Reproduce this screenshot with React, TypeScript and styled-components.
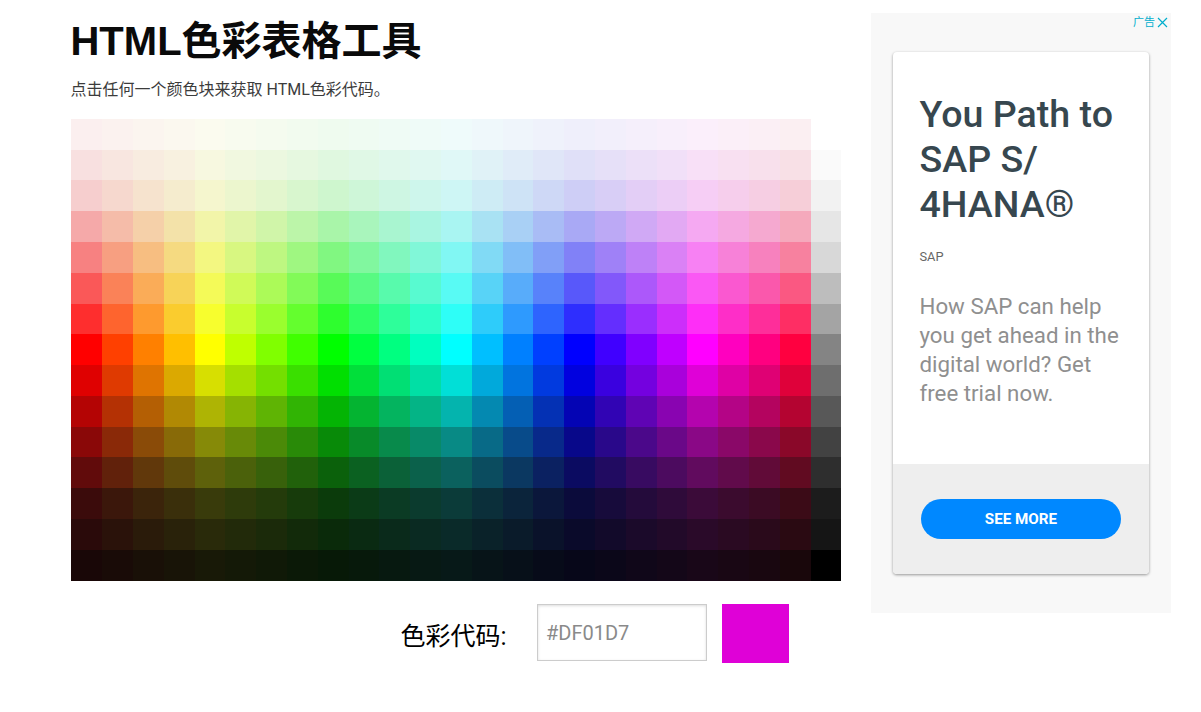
import { useState } from "react";
import styled, { createGlobalStyle } from "styled-components";

const COLUMNS = [
  "FBEFEF F8E0E0 F6CECE F5A9A9 F78181 FA5858 FE2E2E FF0000 DF0101 B40404 8A0808 610B0B 3B0B0B 2A0A0A 190707",
  "FBF2EF F8E6E0 F6D8CE F5BCA9 F79F81 FA8258 FE642E FF4000 DF3A01 B43104 8A2908 61210B 3B170B 2A120A 190B07",
  "FBF5EF F8ECE0 F6E3CE F5D0A9 F7BE81 FAAC58 FE9A2E FF8000 DF7401 B45F04 8A4B08 61380B 3B240B 2A1B0A 191007",
  "FBF8EF F8F1E0 F5ECCE F3E2A9 F5DA81 F7D358 FACC2E FFBF00 DBA901 B18904 886A08 5F4C0B 3A2F0B 29220A 181407",
  "FBFBEF F7F8E0 F5F6CE F2F5A9 F3F781 F4FA58 F7FE2E FFFF00 D7DF01 AEB404 868A08 5E610B 393B0B 292A0A 181907",
  "F8FBEF F1F8E0 ECF6CE E1F5A9 D8F781 D0FA58 C8FE2E BFFF00 A5DF00 86B404 688A08 4B610B 2E3B0B 222A0A 141907",
  "F5FBEF ECF8E0 E3F6CE D0F5A9 BEF781 ACFA58 9AFE2E 80FF00 74DF00 5FB404 4B8A08 38610B 243B0B 1B2A0A 101907",
  "F2FBEF E6F8E0 D8F6CE BCF5A9 9FF781 82FA58 64FE2E 40FF00 3ADF00 31B404 298A08 21610B 173B0B 122A0A 0B1907",
  "EFFBEF E0F8E0 CEF6CE A9F5A9 81F781 58FA58 2EFE2E 00FF00 01DF01 04B404 088A08 0B610B 0B3B0B 0A2A0A 071907",
  "EFFBF2 E0F8E6 CEF6D8 A9F5BC 81F79F 58FA82 2EFE64 00FF40 01DF3A 04B431 088A29 0B6121 0B3B17 0A2A12 07190B",
  "EFFBF5 E0F8EC CEF6E3 A9F5D0 81F7BE 58FAAC 2EFE9A 00FF80 01DF74 04B45F 088A4B 0B6138 0B3B24 0A2A1B 071910",
  "EFFBF8 E0F8F1 CEF6EC A9F5E1 81F7D8 58FAD0 2EFEC8 00FFBF 01DFA5 04B486 088A68 0B614B 0B3B2E 0A2A22 071914",
  "EFFBFB E0F8F7 CEF6F5 A9F5F2 81F7F3 58FAF4 2EFEF7 00FFFF 01DFD7 04B4AE 088A85 0B615E 0B3B39 0A2A29 071918",
  "EFF8FB E0F2F7 CEECF5 A9E2F3 81DAF5 58D3F7 2ECCFA 00BFFF 01A9DB 0489B1 086A87 0B4C5F 0B2F3A 0A2229 071418",
  "EFF5FB E0ECF8 CEE3F6 A9D0F5 81BEF7 58ACFA 2E9AFE 0080FF 0174DF 045FB4 084B8A 0B3861 0B243B 0A1B2A 071019",
  "EFF2FB E0E6F8 CED8F6 A9BCF5 819FF7 5882FA 2E64FE 0040FF 013ADF 0431B4 08298A 0B2161 0B173B 0A122A 070B19",
  "EFEFFB E0E0F8 CECEF6 A9A9F5 8181F7 5858FA 2E2EFE 0000FF 0101DF 0404B4 08088A 0B0B61 0B0B3B 0A0A2A 070719",
  "F2EFFB E6E0F8 D8CEF6 BCA9F5 9F81F7 8258FA 642EFE 4000FF 3A01DF 3104B4 29088A 210B61 170B3B 120A2A 0B0719",
  "F5EFFB ECE0F8 E3CEF6 D0A9F5 BE81F7 AC58FA 9A2EFE 8000FF 7401DF 5F04B4 4B088A 380B61 240B3B 1B0A2A 100719",
  "F8EFFB F1E0F8 ECCEF6 E2A9F3 DA81F5 D358F7 CC2EFA BF00FF A901DB 8904B1 6A0888 4C0B5F 2F0B3A 220A29 140718",
  "FBEFFB F8E0F7 F6CEF5 F5A9F2 F781F3 FA58F4 FE2EF7 FF00FF DF01D7 B404AE 8A0886 610B5E 3B0B39 2A0A29 190718",
  "FBEFF8 F8E0F1 F6CEEC F5A9E1 F781D8 FA58D0 FE2EC8 FF00BF DF01A5 B40486 8A0868 610B4B 3B0B2E 2A0A22 190714",
  "FBEFF5 F8E0EC F6CEE3 F5A9D0 F781BE FA58AC FE2E9A FF0080 DF0174 B4045F 8A084B 610B38 3B0B24 2A0A1B 190710",
  "FBEFF2 F8E0E6 F6CED8 F5A9BC F7819F FA5882 FE2E64 FF0040 DF013A B40431 8A0829 610B21 3B0B17 2A0A12 19070B",
  "FFFFFF FAFAFA F2F2F2 E6E6E6 D8D8D8 BDBDBD A4A4A4 848484 6E6E6E 585858 424242 2E2E2E 1C1C1C 151515 000000",
].map((column) => column.split(" "));

const GlobalStyle = createGlobalStyle`
  body {
    margin: 0;
    background: #fff;
    font-family: Roboto, "Noto Sans CJK SC", sans-serif;
  }
`;

const Page = styled.div`
  display: flex;
  align-items: flex-start;
  padding-left: 71.49px;
`;

const Main = styled.main`
  width: 770px;
  margin-right: 29.51px;
`;

const Title = styled.h1`
  margin: 16px 0 0 -1px;
  font: bold 40px/50px "Liberation Sans", "Noto Sans CJK SC", sans-serif;
  color: #0a0a0a;
`;

const Intro = styled.p`
  margin: 12px 0 0 -1px;
  font-size: 16px;
  line-height: 24px;
  color: #3c3c3c;
`;

const Swatches = styled.div`
  display: grid;
  grid-template-columns: repeat(25, 30.8px);
  grid-template-rows: repeat(15, 30.79px);
  grid-auto-flow: column;
  margin-top: 16.85px;
`;

const Swatch = styled.button`
  display: block;
  padding: 0;
  border: 0;
  cursor: pointer;
`;

const CodeRow = styled.div`
  display: flex;
  align-items: flex-start;
  margin: 23.5px 0 0 329px;
`;

const CodeLabel = styled.label`
  width: 136.5px;
  font-size: 25px;
  line-height: 62px;
  padding-top: 2px;
  color: #000;
`;

const CodeInput = styled.input`
  box-sizing: border-box;
  width: 170px;
  height: 57px;
  padding: 0 8px;
  border: 1px solid #ccc;
  border-radius: 0;
  box-shadow: inset 0 1px 3px #ddd;
  outline: 0;
  font-family: Roboto, sans-serif;
  font-size: 20px;
  color: #8a8a8a;
`;

const Preview = styled.div`
  width: 67px;
  height: 59px;
  margin-left: 15px;
`;

const Ad = styled.aside`
  position: relative;
  box-sizing: border-box;
  width: 300px;
  height: 600px;
  margin-top: 13px;
  padding: 39px 22px 0;
  background: #f8f8f8;
`;

const AdBadge = styled.div`
  position: absolute;
  top: 3px;
  right: 3px;
  display: flex;
  align-items: center;
  gap: 2px;
  font-size: 11px;
  line-height: 13px;
  color: #00aecd;
`;

const AdCard = styled.div`
  overflow: hidden;
  height: 522px;
  border-radius: 4px;
  background: #fff;
  box-shadow: 0 1px 3px rgba(0, 0, 0, 0.4);
`;

const AdBody = styled.div`
  box-sizing: border-box;
  height: 412px;
  padding: 40px 26.5px 0;
`;

const AdHeading = styled.div`
  font-size: 37.6px;
  font-weight: 500;
  line-height: 45px;
  color: #37474f;
`;

const AdSource = styled.div`
  margin-top: 22px;
  font-size: 12.8px;
  line-height: 16px;
  color: #666;
`;

const AdText = styled.div`
  margin-top: 27px;
  font-size: 22.3px;
  line-height: 29px;
  color: #8f8f8f;
`;

const AdFooter = styled.div`
  display: flex;
  justify-content: center;
  padding-top: 35px;
  height: 110px;
  box-sizing: border-box;
  background: #eee;
`;

const AdButton = styled.a`
  width: 200px;
  height: 40px;
  border-radius: 20px;
  background: #0088ff;
  color: #fff;
  font-size: 15.2px;
  font-weight: 700;
  line-height: 40px;
  text-align: center;
`;

export default function App() {
  const [color, setColor] = useState("#DF01D7");

  return (
    <Page>
      <GlobalStyle />
      <Main>
        <Title>HTML色彩表格工具</Title>
        <Intro>点击任何一个颜色块来获取 HTML色彩代码。</Intro>
        <Swatches>
          {COLUMNS.flat().map((hex, i) => (
            <Swatch
              key={i}
              aria-label={`#${hex}`}
              style={{ background: `#${hex}` }}
              onClick={() => setColor(`#${hex}`)}
            />
          ))}
        </Swatches>
        <CodeRow>
          <CodeLabel htmlFor="code">色彩代码:</CodeLabel>
          <CodeInput id="code" readOnly value={color} />
          <Preview style={{ background: color }} />
        </CodeRow>
      </Main>
      <Ad>
        <AdBadge>
          广告
          <svg width="11" height="11" viewBox="0 0 11 11" fill="none" stroke="#00aecd" strokeWidth="1.2">
            <path d="M1 1l9 9M10 1l-9 9" />
          </svg>
        </AdBadge>
        <AdCard>
          <AdBody>
            <AdHeading>You Path to SAP S/ 4HANA®</AdHeading>
            <AdSource>SAP</AdSource>
            <AdText>How SAP can help you get ahead in the digital world? Get free trial now.</AdText>
          </AdBody>
          <AdFooter>
            <AdButton>SEE MORE</AdButton>
          </AdFooter>
        </AdCard>
      </Ad>
    </Page>
  );
}
